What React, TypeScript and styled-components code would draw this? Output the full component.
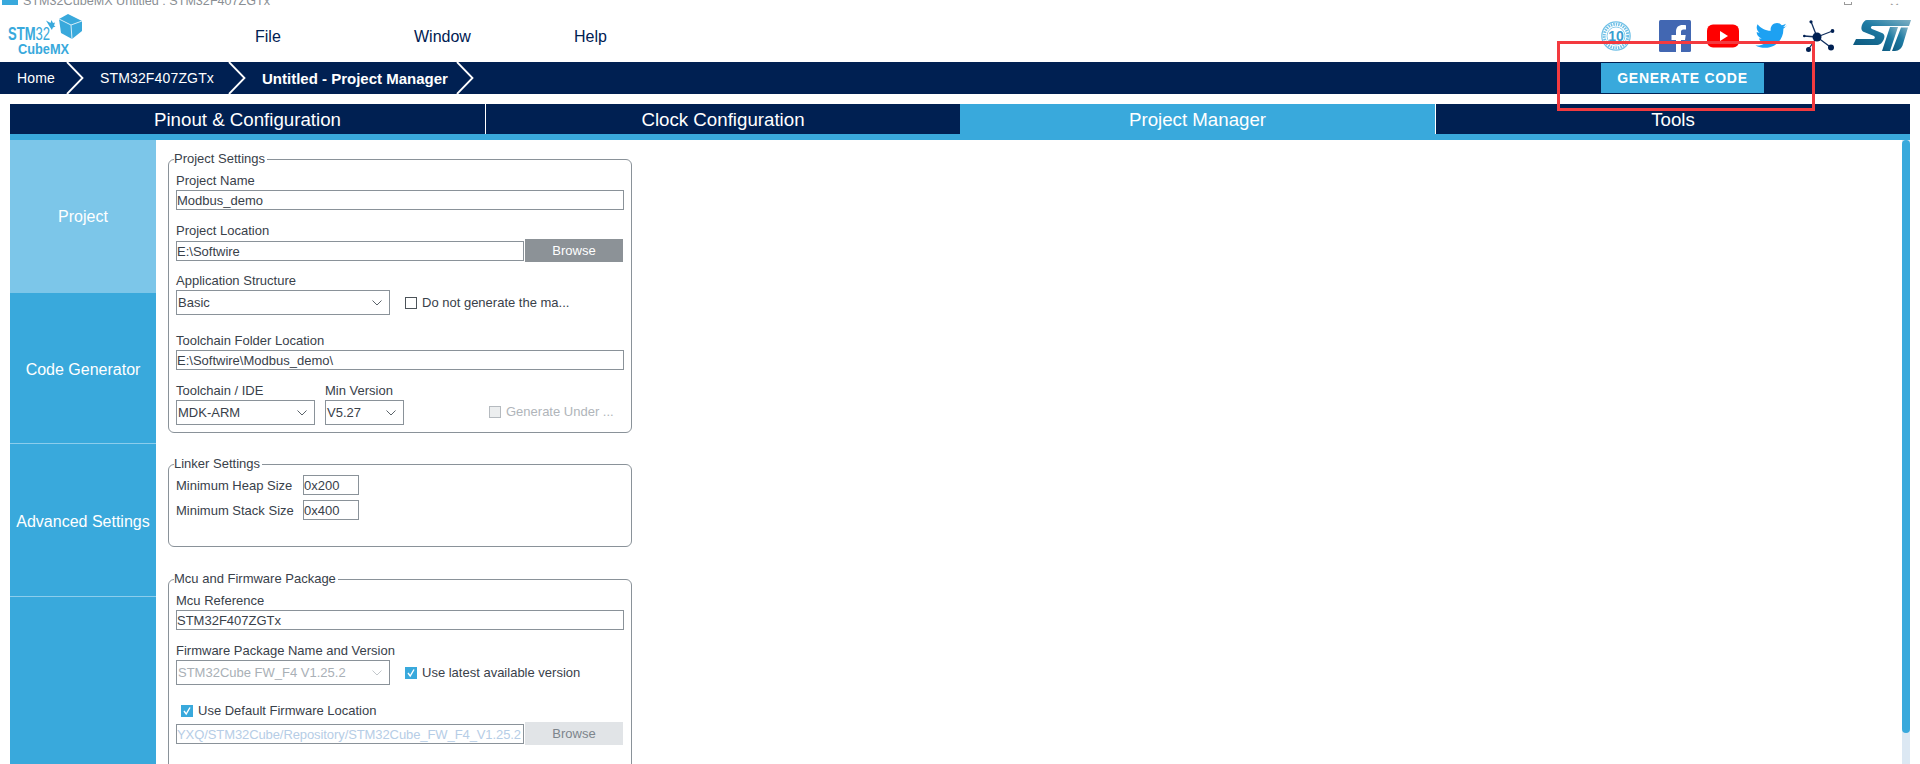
import React from "react";
import styled, { createGlobalStyle } from "styled-components";

const NAVY = "#002052";
const BLUE = "#39a9dc";
const LINE = "#8a9299";
const INK = "#39414a";

const Global = createGlobalStyle`
  html, body { margin: 0; padding: 0; height: 100%; background: #fff; overflow: hidden; }
  body { font-family: "Liberation Sans", Arial, sans-serif; color: ${INK}; }
  * { box-sizing: border-box; }
`;

const Page = styled.div`
  position: relative;
  width: 1920px;
  height: 764px;
  overflow: hidden;
  display: flex;
  flex-direction: column;
`;

const TitleBar = styled.div`
  height: 5px;
  overflow: hidden;
  display: flex;
  align-items: flex-end;
  padding: 0 20px 0 2px;
  flex: none;
`;
const TitleIcon = styled.span`
  width: 16px;
  height: 5px;
  background: ${BLUE};
  flex: none;
  margin-right: 5px;
`;
const TitleText = styled.span`
  font-size: 12.6px;
  line-height: 16px;
  height: 16px;
  color: #8a8f94;
  flex: none;
  margin-bottom: -4px;
  white-space: nowrap;
`;
const WinControls = styled.span`
  margin-left: auto;
  display: flex;
  align-items: flex-end;
  gap: 37px;
`;
const WinMax = styled.span`
  width: 8px;
  height: 3px;
  border: 1px solid #9a9a9a;
  border-top: 0;
`;
const WinClose = styled.span`
  font-size: 13px;
  line-height: 12px;
  height: 3px;
  overflow: hidden;
  color: #9a9a9a;
  display: block;
`;

const Header = styled.header`
  height: 57px;
  flex: none;
  display: flex;
  align-items: center;
  padding-left: 7px;
`;
const Logo = styled.svg`
  width: 80px;
  height: 50px;
  flex: none;
  margin-top: 1px;
`;
const Menu = styled.nav`
  display: flex;
  margin-left: 168px;
  margin-top: 6px;
`;
const MenuItem = styled.span<{ $w: number }>`
  width: ${(p) => p.$w}px;
  font-size: 16px;
  color: ${NAVY};
`;
const Socials = styled.div`
  margin-left: auto;
  margin-right: 9px;
  display: flex;
  align-items: center;
  height: 57px;
  flex: none;
`;
const SocialIcon = styled.svg<{ $w: number; $h: number; $ml: number }>`
  width: ${(p) => p.$w}px;
  height: ${(p) => p.$h}px;
  margin-left: ${(p) => p.$ml}px;
  flex: none;
  display: block;
  margin-top: 5px;
`;

const Crumbs = styled.div`
  height: 32px;
  flex: none;
  background: ${NAVY};
  display: flex;
  align-items: center;
  padding-left: 17px;
  color: #fff;
  font-size: 14px;
  letter-spacing: 0.15px;
`;
const Crumb = styled.span<{ $w: number; $bold?: boolean }>`
  width: ${(p) => p.$w}px;
  flex: none;
  font-weight: ${(p) => (p.$bold ? 700 : 400)};
  font-size: ${(p) => (p.$bold ? 15 : 14)}px;
  letter-spacing: ${(p) => (p.$bold ? 0 : 0.15)}px;
  white-space: nowrap;
`;
const Chevron = styled.svg`
  width: 18px;
  height: 32px;
  flex: none;
  margin-right: 16px;
`;
const Generate = styled.button`
  margin-left: auto;
  margin-right: 156px;
  width: 163px;
  height: 30px;
  border: 0;
  padding: 0;
  background: ${BLUE};
  color: #fff;
  font: 700 14px "Liberation Sans", Arial, sans-serif;
  letter-spacing: 0.73px;
`;

const Tabs = styled.div`
  margin: 10px 10px 0;
  height: 36px;
  flex: none;
  display: grid;
  grid-template-columns: repeat(4, 1fr);
  border-bottom: 6px solid ${BLUE};
`;
const Tab = styled.div<{ $active?: boolean; $sep?: boolean }>`
  background: ${(p) => (p.$active ? BLUE : NAVY)};
  color: #fff;
  font-size: 18.7px;
  padding-top: 1px;
  display: flex;
  align-items: center;
  justify-content: center;
  border-left: ${(p) => (p.$sep ? "1px solid #fff" : "0")};
`;

const Body = styled.div`
  flex: 1;
  min-height: 0;
  margin: 0 10px;
  display: flex;
  position: relative;
  overflow: hidden;
`;
const Side = styled.aside`
  width: 146px;
  flex: none;
  background: ${BLUE};
  display: flex;
  flex-direction: column;
`;
const SideItem = styled.div<{ $active?: boolean; $h: number }>`
  height: ${(p) => p.$h}px;
  flex: none;
  background: ${(p) => (p.$active ? "#7cc6e9" : BLUE)};
  color: #fff;
  font-size: 16px;
  padding-top: ${(p) => (p.$active ? 0 : 4)}px;
  display: flex;
  align-items: center;
  justify-content: center;
  border-bottom: ${(p) => (p.$active ? "0" : "1px solid #8ccdec")};
`;

const Form = styled.main`
  width: 464px;
  margin-left: 12px;
  padding-top: 11px;
  flex: none;
  display: flex;
  flex-direction: column;
`;
const Group = styled.fieldset<{ $h: number; $gap: number }>`
  height: ${(p) => p.$h}px;
  margin: 0 0 ${(p) => p.$gap}px;
  padding: 0 7px;
  border: 1px solid ${LINE};
  border-radius: 6px;
  flex: none;
  font-size: 13px;
  display: block;
  min-width: 0;
`;
const Legend = styled.legend`
  padding: 0 2px 0 0;
  margin-left: -2px;
  font-size: 13px;
  line-height: 16px;
  height: 16px;
`;
const Label = styled.div<{ $top?: number; $mb?: number }>`
  font-size: 13px;
  line-height: 18px;
  height: 16px;
  margin-top: ${(p) => p.$top ?? 0}px;
  margin-bottom: ${(p) => p.$mb ?? 2}px;
  white-space: nowrap;
`;
const TextBox = styled.div<{ $w?: number; $disabled?: boolean; $tight?: boolean }>`
  width: ${(p) => (p.$w ? `${p.$w}px` : "100%")};
  height: 20px;
  flex: none;
  border: 1px solid ${LINE};
  background: #fff;
  color: ${(p) => (p.$disabled ? "#b6cde6" : INK)};
  font-size: 13px;
  line-height: 19px;
  letter-spacing: ${(p) => (p.$tight ? -0.09 : 0)}px;
  white-space: nowrap;
  overflow: hidden;
`;
const Row = styled.div<{ $top?: number }>`
  display: flex;
  align-items: center;
  margin-top: ${(p) => p.$top ?? 0}px;
`;
const EndRow = styled.div`
  display: flex;
  align-items: center;
  align-self: flex-end;
  margin-bottom: 6px;
`;
const BrowseBtn = styled.div<{ $disabled?: boolean }>`
  width: 98px;
  height: 23px;
  margin-left: 1px;
  flex: none;
  background: ${(p) => (p.$disabled ? "#e1e4e7" : "#8c9297")};
  color: ${(p) => (p.$disabled ? "#7d858c" : "#fff")};
  font-size: 13px;
  display: flex;
  align-items: center;
  justify-content: center;
`;
const SelectBox = styled.div<{ $w: number; $disabled?: boolean }>`
  width: ${(p) => p.$w}px;
  height: 25px;
  flex: none;
  border: 1px solid ${LINE};
  color: ${(p) => (p.$disabled ? "#a9b0b6" : INK)};
  font-size: 13px;
  padding-left: 1px;
  display: flex;
  align-items: center;
  justify-content: space-between;
  white-space: nowrap;
`;
const Caret = styled.svg`
  width: 10px;
  height: 6px;
  margin-right: 7px;
  flex: none;
`;
const Check = styled.span<{ $on?: boolean; $disabled?: boolean; $ml?: number }>`
  width: 12px;
  height: 12px;
  flex: none;
  margin-left: ${(p) => p.$ml ?? 0}px;
  border: 1px solid ${(p) => (p.$on ? BLUE : p.$disabled ? "#b5babf" : "#4c5359")};
  background: ${(p) => (p.$on ? BLUE : p.$disabled ? "#eceeef" : "#fff")};
  display: flex;
  align-items: center;
  justify-content: center;
`;
const CheckLabel = styled.span<{ $disabled?: boolean }>`
  margin-left: 5px;
  font-size: 13px;
  color: ${(p) => (p.$disabled ? "#b0b5ba" : INK)};
  white-space: nowrap;
`;
const Col = styled.div<{ $w: number }>`
  width: ${(p) => p.$w}px;
  flex: none;
`;
const Spec = styled.span`
  width: 127px;
  flex: none;
  font-size: 13px;
  white-space: nowrap;
`;
const Highlight = styled.div`
  position: absolute;
  left: 1557px;
  top: 41px;
  width: 258px;
  height: 70px;
  border: 3px solid #f33a3f;
  pointer-events: none;
`;
const ScrollTrack = styled.div`
  position: absolute;
  right: 0;
  top: 0;
  bottom: 0;
  width: 8px;
  background: #dce8f3;
`;
const ScrollThumb = styled.div`
  width: 8px;
  height: 593px;
  background: ${BLUE};
  border-radius: 4px;
`;

const Arrow = () => (
  <Chevron viewBox="0 0 18 32">
    <path d="M1 0 L16.500 16 L1 32" fill="none" stroke="#fff" strokeWidth="1.800" />
  </Chevron>
);
const Down = ({ c = "#5b636a" }: { c?: string }) => (
  <Caret viewBox="0 0 10 6">
    <path d="M.5 .5 L5 5 L9.500 .5" fill="none" stroke={c} strokeWidth="1" />
  </Caret>
);
const Tick = () => (
  <svg width="10" height="10" viewBox="0 0 10 10">
    <path d="M2 5 L4.200 8 L8 1.500" fill="none" stroke="#fff" strokeWidth="1.400" />
  </svg>
);

export default function App() {
  return (
    <Page>
      <Global />
      <TitleBar>
        <TitleIcon />
        <TitleText>STM32CubeMX Untitled : STM32F407ZGTx</TitleText>
        <WinControls>
          <WinMax />
          <WinClose>✕</WinClose>
        </WinControls>
      </TitleBar>

      <Header>
        <Logo viewBox="0 0 80 50">
          <path d="M39 11.500l4.500 2.500 1-3 1.500 3 2-.5-1 3 1.500 1-2.600 1-1 2.500-2-3z" fill={BLUE} />
          <path d="M52 10 L61 5 L75 12 L75 22 L65 30 L54 24 Z" fill={BLUE} />
          <path d="M52 10 L64 16 L75 12 M64 16 L65 30" fill="none" stroke="#d6eef9" strokeWidth="1" />
          <text x="1" y="31" fontFamily="Liberation Sans" fontSize="19" fill={BLUE} textLength="42" lengthAdjust="spacingAndGlyphs">
            <tspan fontWeight="700">STM</tspan>
            <tspan>32</tspan>
          </text>
          <text x="11" y="45" fontFamily="Liberation Sans" fontWeight="700" fontSize="14" fill={BLUE} textLength="51" lengthAdjust="spacingAndGlyphs">CubeMX</text>
        </Logo>
        <Menu>
          <MenuItem $w={159}>File</MenuItem>
          <MenuItem $w={160}>Window</MenuItem>
          <MenuItem $w={40}>Help</MenuItem>
        </Menu>
        <Socials>
          <SocialIcon $w={30} $h={30} $ml={0} viewBox="0 0 30 30">
            <circle cx="15" cy="15" r="14.200" fill="none" stroke="#6fc0e6" strokeWidth="1.200" />
            <circle cx="15" cy="15" r="11.800" fill="none" stroke="#6fc0e6" strokeWidth="3" strokeDasharray="1.500 1" />
            <circle cx="15" cy="15" r="9" fill="#fff" stroke="#6fc0e6" strokeWidth=".8" />
            <text x="15" y="20" textAnchor="middle" fontFamily="Liberation Sans" fontWeight="700" fontSize="14" fill="#3a9ed0">10</text>
          </SocialIcon>
          <SocialIcon $w={32} $h={32} $ml={28} viewBox="0 0 32 32">
            <rect width="32" height="32" rx="1.500" fill="#4267b2" />
            <path d="M22 32V20h4l.7-5H22v-3c0-1.500.6-2.500 2.600-2.500H27V5.200C26 5 24.800 5 23.500 5 19.800 5 17 7.200 17 11.400V15h-4.500v5H17v12z" fill="#fff" />
          </SocialIcon>
          <SocialIcon $w={32} $h={24} $ml={16} viewBox="0 0 32 24">
            <rect width="32" height="23" y=".5" rx="6" fill="#ff0000" />
            <path d="M13 7l8 5-8 5z" fill="#fff" />
          </SocialIcon>
          <SocialIcon $w={32} $h={26} $ml={16} viewBox="0 0 24 20">
            <path d="M24 2.400c-.9.400-1.800.7-2.800.8 1-.6 1.800-1.600 2.200-2.700-1 .6-2 1-3.100 1.200C19.300.7 18 0 16.600 0c-2.700 0-4.900 2.200-4.900 4.900 0 .4 0 .8.100 1.100C7.700 5.800 4.100 3.900 1.700.9c-.4.700-.7 1.600-.7 2.500 0 1.700.9 3.200 2.200 4.100-.8 0-1.600-.2-2.200-.6v.1c0 2.400 1.700 4.400 3.900 4.800-.4.100-.8.200-1.300.2-.3 0-.6 0-.9-.1.6 2 2.400 3.400 4.600 3.400-1.700 1.300-3.800 2.100-6.100 2.100-.4 0-.8 0-1.200-.1C2.200 18.300 4.800 19.100 7.500 19.100c9.100 0 14-7.500 14-14v-.6c1-.7 1.800-1.600 2.500-2.500z" fill="#1da1f2" />
          </SocialIcon>
          <SocialIcon $w={32} $h={32} $ml={16} viewBox="0 0 32 32">
            <path d="M14 17 L8 1.500 M14 17 L29.500 11 M14 17 L1 16 M14 17 L28 27.500 M14 17 L5 30" stroke="#12305f" strokeWidth="1.300" fill="none" />
            <circle cx="14" cy="17" r="4.500" fill={NAVY} />
            <circle cx="8" cy="1.800" r="1.600" fill={NAVY} />
            <circle cx="29.500" cy="11" r="1.900" fill={NAVY} />
            <circle cx="1.300" cy="16" r="1.300" fill={NAVY} />
            <circle cx="28" cy="27.500" r="3" fill={NAVY} />
            <circle cx="5.500" cy="29.500" r="2.500" fill={NAVY} />
          </SocialIcon>
          <SocialIcon $w={58} $h={32} $ml={18} viewBox="0 0 58 32">
            <defs>
              <linearGradient id="st" x1="0" y1="1" x2="1" y2="0">
                <stop offset="0" stopColor="#0d5a80" />
                <stop offset=".55" stopColor="#1f7ba3" />
                <stop offset="1" stopColor="#7fb0c4" />
              </linearGradient>
            </defs>
            <path d="M14 0 H58 L56 6 H20 C18 6 17 8 19 9 L29 13 C32 14.500 32 17 30.500 20 C29 23 27 25 23 25 H0 L3 19 H20 C22 19 22.500 17 21 16 L11 12 C8 10.500 8 8 9 5 C10 2 12 0 14 0 Z" fill="url(#st)" />
            <path d="M37 7 H45 L37 31 H29 Z" fill="url(#st)" />
            <path d="M48 7.500 H55 L50 24 C49 28 46 31 42 31 H39 Z" fill="url(#st)" />
          </SocialIcon>
        </Socials>
      </Header>

      <Crumbs>
        <Crumb $w={49}>Home</Crumb>
        <Arrow />
        <Crumb $w={128}>STM32F407ZGTx</Crumb>
        <Arrow />
        <Crumb $w={194} $bold>Untitled - Project Manager</Crumb>
        <Arrow />
        <Generate>GENERATE CODE</Generate>
      </Crumbs>

      <Tabs>
        <Tab>Pinout &amp; Configuration</Tab>
        <Tab $sep>Clock Configuration</Tab>
        <Tab $active>Project Manager</Tab>
        <Tab $sep>Tools</Tab>
      </Tabs>

      <Body>
        <Side>
          <SideItem $active $h={153}>Project</SideItem>
          <SideItem $h={151}>Code Generator</SideItem>
          <SideItem $h={153}>Advanced Settings</SideItem>
        </Side>
        <Form>
          <Group $h={282} $gap={23}>
            <Legend>Project Settings</Legend>
            <Label $top={5}>Project Name</Label>
            <TextBox>Modbus_demo</TextBox>
            <Label $top={12} $mb={1}>Project Location</Label>
            <Row>
              <TextBox $w={348}>E:\Softwire</TextBox>
              <BrowseBtn>Browse</BrowseBtn>
            </Row>
            <Label $top={10}>Application Structure</Label>
            <Row>
              <SelectBox $w={214}>Basic<Down /></SelectBox>
              <Check $ml={15} />
              <CheckLabel>Do not generate the ma...</CheckLabel>
            </Row>
            <Label $top={17}>Toolchain Folder Location</Label>
            <TextBox>E:\Softwire\Modbus_demo\</TextBox>
            <Row $top={12}>
              <Col $w={149}>
                <Label>Toolchain / IDE</Label>
                <SelectBox $w={139}>MDK-ARM<Down /></SelectBox>
              </Col>
              <Col $w={164}>
                <Label>Min Version</Label>
                <SelectBox $w={79}>V5.27<Down /></SelectBox>
              </Col>
              <EndRow>
                <Check $disabled />
                <CheckLabel $disabled>Generate Under ...</CheckLabel>
              </EndRow>
            </Row>
          </Group>

          <Group $h={91} $gap={24}>
            <Legend>Linker Settings</Legend>
            <Row $top={3}>
              <Spec>Minimum Heap Size</Spec>
              <TextBox $w={56}>0x200</TextBox>
            </Row>
            <Row $top={5}>
              <Spec>Minimum Stack Size</Spec>
              <TextBox $w={56}>0x400</TextBox>
            </Row>
          </Group>

          <Group $h={300} $gap={0}>
            <Legend>Mcu and Firmware Package</Legend>
            <Label $top={5}>Mcu Reference</Label>
            <TextBox>STM32F407ZGTx</TextBox>
            <Label $top={12}>Firmware Package Name and Version</Label>
            <Row>
              <SelectBox $w={214} $disabled>STM32Cube FW_F4 V1.25.2<Down c="#c3c8cc" /></SelectBox>
              <Check $on $ml={15}><Tick /></Check>
              <CheckLabel>Use latest available version</CheckLabel>
            </Row>
            <Row $top={18}>
              <Check $on $ml={5}><Tick /></Check>
              <CheckLabel>Use Default Firmware Location</CheckLabel>
            </Row>
            <Row $top={4}>
              <TextBox $w={348} $disabled $tight>YXQ/STM32Cube/Repository/STM32Cube_FW_F4_V1.25.2</TextBox>
              <BrowseBtn $disabled>Browse</BrowseBtn>
            </Row>
          </Group>
        </Form>
        <ScrollTrack>
          <ScrollThumb />
        </ScrollTrack>
      </Body>

      <Highlight />
    </Page>
  );
}
